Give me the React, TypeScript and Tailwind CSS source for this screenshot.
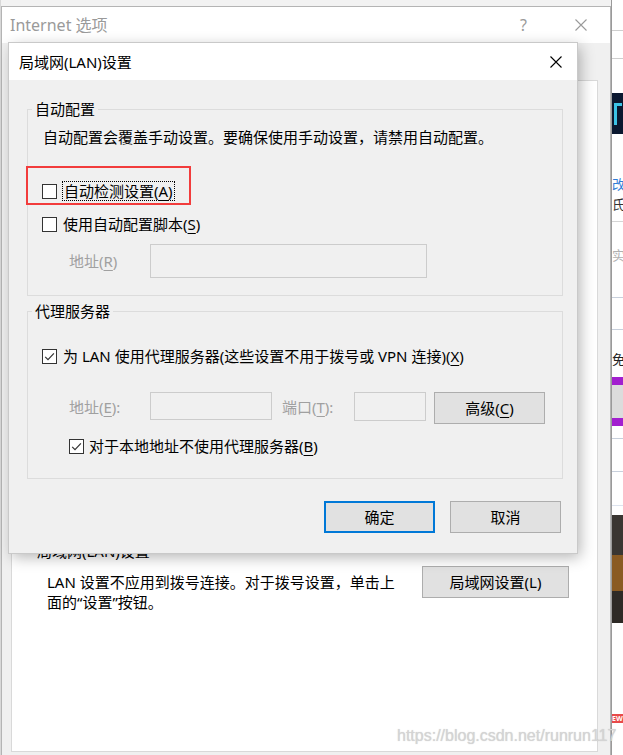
import React from 'react';

// Win10 style "局域网(LAN)设置" dialog over "Internet 选项"

const CloseIcon = ({ className }: { className: string }) => (
  <svg viewBox="0 0 12 12" className={className} fill="none" stroke="currentColor" strokeWidth="1.1">
    <path d="M0.5 0.5L11.5 11.5M11.5 0.5L0.5 11.5" />
  </svg>
);

const Checkbox = ({ checked }: { checked?: boolean }) => (
  <span className="w-[15px] h-[15px] border border-[#333333] bg-white flex items-center justify-center shrink-0">
    {checked && (
      <svg viewBox="0 0 13 13" className="w-[13px] h-[13px]" fill="none" stroke="#333333" strokeWidth="1.2">
        <path d="M2.2 6.8L5 9.6L10.9 3.4" />
      </svg>
    )}
  </span>
);

const Key = ({ k }: { k: string }) => (
  <span className="underline underline-offset-[3px] decoration-1">{k}</span>
);

const Field = ({ w, h }: { w: string; h: string }) => (
  <div className={`${w} ${h} border border-[#cccccc] bg-[#f0f0f0] shrink-0`} />
);

const Button = ({ children, primary }: { children: React.ReactNode; primary?: boolean }) => (
  <div
    className={
      primary
        ? 'w-[111px] h-[32px] bg-[#e1e1e1] border-2 border-[#0078d7] flex items-center justify-center'
        : 'w-[111px] h-[32px] bg-[#e1e1e1] border border-[#adadad] flex items-center justify-center'
    }
  >
    {children}
  </div>
);

function LanDialog() {
  return (
    <div className="absolute left-[9px] top-[43px] w-[568px] h-[510px] flex flex-col shadow-[0_0_0_1px_#c9c9c9,3px_4px_14px_rgba(0,0,0,0.3)]">
      <div className="h-[37px] bg-white flex items-center justify-between pl-[10px] pr-[15px]">
        <span>局域网(LAN)设置</span>
        <CloseIcon className="w-[12px] h-[12px] text-black" />
      </div>
      <div className="flex-1 bg-[#f0f0f0] pl-[18px] pr-[14px] pt-[19px]">
        <fieldset className="border border-[#dcdcdc] p-0 m-0">
          <legend className="ml-[4px] px-[3px] leading-[20px]">自动配置</legend>
          <div className="pl-[14px] pr-[14px] pb-[17px]">
            <p className="mt-[8px] ml-[1px] leading-[20px]">自动配置会覆盖手动设置。要确保使用手动设置，请禁用自动配置。</p>
            <div className="relative mt-[34px] h-[20px] flex items-center">
              <div className="absolute left-[-16px] top-[-15px] w-[165px] h-[39px] border-2 border-[#f23c3c]" />
              <Checkbox />
              <span className="ml-[5px] px-[1px] border border-dotted border-black leading-[18px]">
                自动检测设置(<Key k="A" />)
              </span>
            </div>
            <div className="mt-[13px] h-[20px] flex items-center">
              <Checkbox />
              <span className="ml-[6px]">
                使用自动配置脚本(<Key k="S" />)
              </span>
            </div>
            <div className="mt-[10px] h-[34px] flex items-center">
              <span className="ml-[27px] w-[81px] text-[#a0a0a0]">
                地址(<Key k="R" />)
              </span>
              <Field w="w-[277px]" h="h-[34px]" />
            </div>
          </div>
        </fieldset>

        <fieldset className="mt-[5px] border border-[#dcdcdc] p-0 m-0">
          <legend className="ml-[4px] px-[3px] leading-[20px]">代理服务器</legend>
          <div className="pl-[14px] pr-[14px] pb-[22px]">
            <div className="mt-[25px] h-[20px] flex items-center">
              <Checkbox checked />
              <span className="ml-[6px]">
                为 LAN 使用代理服务器(这些设置不用于拨号或 VPN 连接)(<Key k="X" />)
              </span>
            </div>
            <div className="mt-[26px] flex items-start">
              <span className="ml-[27px] w-[81px] leading-[30px] text-[#a0a0a0]">
                地址(<Key k="E" />):
              </span>
              <Field w="w-[122px]" h="h-[28px]" />
              <span className="ml-[10px] w-[72px] leading-[30px] text-[#a0a0a0]">
                端口(<Key k="T" />):
              </span>
              <Field w="w-[72px]" h="h-[29px]" />
              <div className="ml-[8px]">
                <Button>
                  <span>
                    高级(<Key k="C" />)
                  </span>
                </Button>
              </div>
            </div>
            <div className="mt-[12px] h-[20px] flex items-center ml-[27px]">
              <Checkbox checked />
              <span className="ml-[5px]">
                对于本地地址不使用代理服务器(<Key k="B" />)
              </span>
            </div>
          </div>
        </fieldset>

        <div className="mt-[22px] flex justify-end gap-[15px] pr-[2px]">
          <Button primary>确定</Button>
          <Button>取消</Button>
        </div>
      </div>
    </div>
  );
}

function PageStrip() {
  // sliver of the web page behind the window
  return (
    <div className="w-[12px] h-full bg-white flex flex-col overflow-hidden text-[13px] leading-[16px] border-l border-[#9a9a9a]">
      <div className="h-[30px] shrink-0" />
      <div className="h-[1px] bg-[#cfcfcf] shrink-0" />
      <div className="h-[27px] shrink-0" />
      <div className="h-[1px] bg-[#cfcfcf] shrink-0" />
      <div className="h-[34px] shrink-0" />
      <div className="h-[41px] bg-[#0b1830] shrink-0 flex items-center">
        <div className="w-[8px] h-[22px] border-t-[3px] border-l-[3px] border-[#3cc3e6] ml-[2px]" />
      </div>
      <div className="h-[42px] shrink-0" />
      <div className="shrink-0 text-[#2f7cd6] whitespace-nowrap">改]</div>
      <div className="shrink-0 mt-[4px] text-[#333] whitespace-nowrap">氏</div>
      <div className="h-[9px] shrink-0" />
      <div className="h-[1px] bg-[#d5d5d5] shrink-0" />
      <div className="h-[25px] shrink-0" />
      <div className="shrink-0 text-[#b0b0b0] whitespace-nowrap">实</div>
      <div className="h-[34px] shrink-0" />
      <div className="h-[1px] bg-[#c8d0dc] shrink-0" />
      <div className="h-[31px] shrink-0" />
      <div className="h-[1px] bg-[#c8d0dc] shrink-0" />
      <div className="h-[21px] shrink-0" />
      <div className="shrink-0 text-[#222] whitespace-nowrap">免</div>
      <div className="h-[10px] shrink-0" />
      <div className="h-[8px] bg-[#a21fcf] shrink-0" />
      <div className="h-[33px] bg-[#dcdcdc] shrink-0" />
      <div className="h-[8px] bg-[#a21fcf] shrink-0" />
      <div className="h-[12px] shrink-0" />
      <div className="h-[1px] bg-[#c8d0dc] shrink-0" />
      <div className="h-[32px] shrink-0" />
      <div className="h-[1px] bg-[#c8d0dc] shrink-0" />
      <div className="h-[33px] shrink-0" />
      <div className="h-[1px] bg-[#dde3ee] shrink-0" />
      <div className="h-[9px] shrink-0" />
      <div className="h-[40px] bg-[#3a3632] shrink-0" />
      <div className="h-[36px] bg-[#8a5a22] shrink-0" />
      <div className="h-[32px] bg-[#2e2a26] shrink-0" />
      <div className="h-[91px] shrink-0" />
      <div className="h-[9px] bg-[#e84a4a] shrink-0 text-[7px] leading-[9px] text-white font-bold">EW</div>
    </div>
  );
}

export default function App() {
  return (
    <div className="relative w-[623px] h-[755px] overflow-hidden bg-[#f2f2f2] flex text-[15px] leading-[20px] text-black font-['Noto_Sans','Noto_Sans_CJK_SC',sans-serif]">
      <div className="w-[1px] h-full bg-[#d8d8d8]" />

      {/* Internet 选项 window */}
      <div className="w-[610px] mt-[6px] flex flex-col border border-b-0 border-[#b4b4b4] bg-[#f0f0f0]">
        <div className="h-[36px] bg-white flex items-center pl-[8px] pr-[23px] shrink-0">
          <span className="text-[#9a9a9a] text-[16px]">Internet 选项</span>
          <span className="ml-auto text-[#9a9a9a] text-[16px]">?</span>
          <CloseIcon className="ml-[48px] w-[12px] h-[12px] text-[#9a9a9a]" />
        </div>
        <div className="flex-1 flex flex-col pl-[9px] pr-[12px] pt-[37px] pb-[3px]">
          <div className="flex-1 bg-white border border-[#d9d9d9] pl-[25px] pr-[28px] pt-[460px]">
            <div className="leading-[20px]">局域网(LAN)设置</div>
            <div className="mt-[5px] flex items-start">
              <div className="mt-[6px] ml-[10px] leading-[20px]">
                <div>LAN 设置不应用到拨号连接。对于拨号设置，单击上</div>
                <div>面的“设置”按钮。</div>
              </div>
              <div className="ml-auto w-[147px] h-[32px] bg-[#e1e1e1] border border-[#adadad] flex items-center justify-center">
                局域网设置(L)
              </div>
            </div>
          </div>
        </div>
      </div>

      <PageStrip />

      <LanDialog />

      <span className="absolute left-[397px] top-[726px] text-[16px] leading-[20px] text-[#d4d4d4] font-['Liberation_Sans',sans-serif] [text-shadow:0_0_1px_rgba(120,120,120,0.35)]">
        https://blog.csdn.net/runrun117
      </span>
    </div>
  );
}
